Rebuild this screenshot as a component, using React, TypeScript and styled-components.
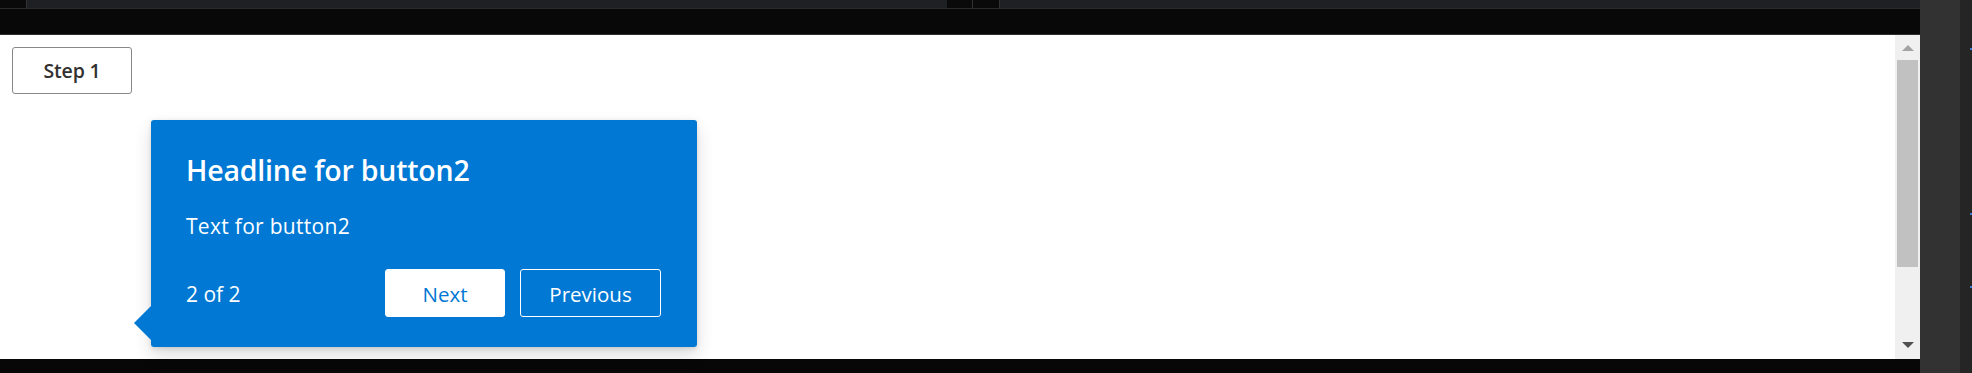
import React from "react";
import styled, { createGlobalStyle } from "styled-components";

const GlobalStyle = createGlobalStyle`
  html, body { margin: 0; padding: 0; background: #070707; overflow: hidden; }
  * { box-sizing: border-box; }
`;

const FONT = `"Open Sans", "Noto Sans", "Liberation Sans", sans-serif`;

const Screen = styled.div`
  display: flex;
  width: 1972px;
  height: 373px;
  background: #070707;
`;

const MainColumn = styled.div`
  display: flex;
  flex-direction: column;
  width: 1920px;
  height: 100%;
`;

const TabStrip = styled.div`
  display: flex;
  height: 9px;
  border-bottom: 1px solid #2b2b2d;
  background: #1f2024;
`;

const TabSegment = styled.div<{ $w?: number; $dark?: boolean }>`
  width: ${(p) => (p.$w ? `${p.$w}px` : "auto")};
  flex: ${(p) => (p.$w ? "none" : "1")};
  background: ${(p) => (p.$dark ? "#0a0a0b" : "#1f2024")};
  border-right: ${(p) => (p.$dark ? "1px solid #333336" : "none")};
`;

const ToolBand = styled.div`
  height: 26px;
  background: #080808;
  border-bottom: 1px solid #2e2e2e;
`;

const Preview = styled.div`
  display: flex;
  height: 324px;
  background: #ffffff;
`;

const Content = styled.div`
  position: relative;
  flex: 1;
  padding: 12px 0 0 12px;
`;

const StepButton = styled.button`
  width: 120px;
  height: 47px;
  border: 1px solid #8a8886;
  border-radius: 3px;
  background: #ffffff;
  color: #323130;
  font-family: ${FONT};
  font-size: 19.5px;
  font-weight: 600;
  letter-spacing: -0.2px;
  padding: 0;
  cursor: pointer;
`;

const Bubble = styled.div`
  position: absolute;
  left: 151px;
  top: 85px;
  width: 546px;
  height: 227px;
  background: #0078d4;
  border-radius: 3px;
  box-shadow: 0 8px 18px rgba(0, 0, 0, 0.14), 0 1.5px 4.5px rgba(0, 0, 0, 0.11);
  padding: 30px 36px 30px 35px;
  display: flex;
  flex-direction: column;
  color: #ffffff;
  font-family: ${FONT};
`;

const Beak = styled.div`
  position: absolute;
  left: -12px;
  top: 191px;
  width: 24px;
  height: 24px;
  background: #0078d4;
  transform: rotate(45deg);
`;

const Headline = styled.h2`
  position: relative;
  margin: 0;
  font-size: 28.5px;
  line-height: 41px;
  font-weight: 600;
  letter-spacing: -0.2px;
`;

const BodyText = styled.p`
  position: relative;
  margin: 21px 0 0 0;
  font-size: 21px;
  line-height: 28px;
  font-weight: 400;
  letter-spacing: 0.3px;
`;

const Footer = styled.div`
  position: relative;
  margin-top: auto;
  display: flex;
  align-items: center;
  gap: 15px;
`;

const Counter = styled.span`
  flex: 1;
  font-size: 21px;
  padding-top: 2px;
`;

const BubbleButton = styled.button<{ $primary?: boolean; $w: number }>`
  width: ${(p) => p.$w}px;
  height: 48px;
  border-radius: 3px;
  border: 1px solid #ffffff;
  background: ${(p) => (p.$primary ? "#ffffff" : "transparent")};
  color: ${(p) => (p.$primary ? "#0078d4" : "#ffffff")};
  font-family: ${FONT};
  font-size: 20.5px;
  padding: 2px 0 0 0;
  cursor: pointer;
`;

const ScrollTrack = styled.div`
  width: 25px;
  display: flex;
  flex-direction: column;
  align-items: center;
  background: #f0f0f0;
`;

const Arrow = styled.div<{ $down?: boolean }>`
  width: 0;
  height: 0;
  border-left: 6px solid transparent;
  border-right: 6px solid transparent;
  ${(p) =>
    p.$down
      ? "border-top: 6px solid #505050; margin-top: auto; margin-bottom: 11px;"
      : "border-bottom: 6px solid #a3a3a3; margin-top: 10px;"}
`;

const Thumb = styled.div`
  width: 21px;
  height: 207px;
  margin-top: 9px;
  background: #c1c1c1;
`;

const BottomBand = styled.div`
  flex: 1;
  background: #070707;
`;

const Gutter = styled.div`
  width: 40px;
  background: #323232;
`;

const Ruler = styled.div`
  position: relative;
  width: 12px;
  background: #252526;
`;

const RulerMark = styled.div`
  position: absolute;
  right: 0;
  width: 2px;
  height: 2px;
  background: #3a7bd5;
`;

const marks = [48, 213, 286];

export default function App() {
  return (
    <>
      <GlobalStyle />
      <Screen>
        <MainColumn>
          <TabStrip>
            <TabSegment $w={27} $dark />
            <TabSegment $w={920} />
            <TabSegment $w={26} $dark />
            <TabSegment $w={27} $dark />
            <TabSegment />
          </TabStrip>
          <ToolBand />
          <Preview>
            <Content>
              <StepButton>Step 1</StepButton>
              <Bubble>
                <Beak />
                <Headline>Headline for button2</Headline>
                <BodyText>Text for button2</BodyText>
                <Footer>
                  <Counter>2 of 2</Counter>
                  <BubbleButton $primary $w={120}>Next</BubbleButton>
                  <BubbleButton $w={141}>Previous</BubbleButton>
                </Footer>
              </Bubble>
            </Content>
            <ScrollTrack>
              <Arrow />
              <Thumb />
              <Arrow $down />
            </ScrollTrack>
          </Preview>
          <BottomBand />
        </MainColumn>
        <Gutter />
        <Ruler>
          {marks.map((y) => (
            <RulerMark key={y} style={{ top: y }} />
          ))}
        </Ruler>
      </Screen>
    </>
  );
}
